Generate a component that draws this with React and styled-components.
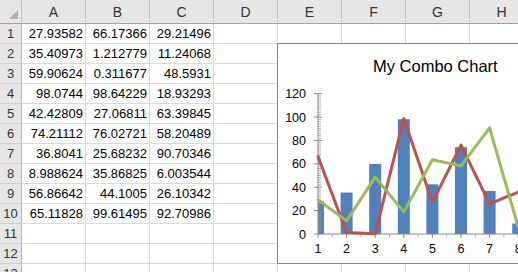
import React from "react";
import styled, { createGlobalStyle } from "styled-components";

const GlobalStyle = createGlobalStyle`
  html, body { margin: 0; padding: 0; background: #fff; overflow: hidden; }
  body { font-family: "Liberation Sans", Arial, sans-serif; }
`;

const Page = styled.div`
  width: 518px;
  height: 272px;
  overflow: hidden;
  position: relative;
`;

const Sheet = styled.div`
  display: grid;
  grid-template-columns: 22px repeat(8, 64px);
  grid-template-rows: 24px;
  grid-auto-rows: 20px;
  width: 534px;
  font-size: 13px;
`;

const Corner = styled.div`
  box-sizing: border-box;
  background: #e6e6e6;
  border-right: 1px solid #c4c4c4;
  border-bottom: 1px solid #a3a3a3;
  display: flex;
  justify-content: flex-end;
  align-items: flex-end;
  padding: 0 3px 4px 0;
`;

const Triangle = styled.div`
  width: 0;
  height: 0;
  border-left: 9px solid transparent;
  border-bottom: 9px solid #b1b1b1;
`;

const ColHeader = styled.div`
  box-sizing: border-box;
  background: #e6e6e6;
  border-right: 1px solid #c4c4c4;
  border-bottom: 1px solid #a3a3a3;
  display: flex;
  align-items: center;
  justify-content: center;
  color: #333;
  font-size: 14px;
  padding-top: 1px;
`;

const RowHeader = styled.div`
  box-sizing: border-box;
  background: #e6e6e6;
  border-right: 1px solid #b5b5b5;
  border-bottom: 1px solid #cfcfcf;
  display: flex;
  align-items: center;
  justify-content: center;
  color: #333;
  font-size: 13px;
`;

const Cell = styled.div`
  box-sizing: border-box;
  border-right: 1px solid #d9d9d9;
  border-bottom: 1px solid #d9d9d9;
  display: flex;
  align-items: center;
  justify-content: flex-end;
  padding-right: 2px;
  color: #000;
  white-space: nowrap;
`;

const ChartBox = styled.div`
  position: absolute;
  left: 277px;
  top: 43px;
  width: 330px;
  height: 221px;
  box-sizing: border-box;
  border: 1px solid #868686;
  background: #fff;
  overflow: hidden;
`;

const A = [27.93582, 35.40973, 59.90624, 98.0744, 42.42809, 74.21112, 36.8041, 8.988624, 56.86642, 65.11828];
const B = [66.17366, 1.212779, 0.311677, 98.64229, 27.06811, 76.02721, 25.68232, 35.86825, 44.1005, 99.61495];
const C = [29.21496, 11.24068, 48.5931, 18.93293, 63.39845, 58.20489, 90.70346, 6.003544, 26.10342, 92.70986];
const COLS = ["A", "B", "C", "D", "E", "F", "G", "H"];

const AX = 318;
const Y0 = 234;
const K = 1.17;
const STEP = 28.6;
const cx = (i) => AX + i * STEP;
const cy = (v) => Y0 - v * K;

function Chart() {
  const linePts = (arr) => arr.map((v, i) => `${cx(i)},${cy(v)}`).join(" ");
  const minor = [];
  for (let v = 0; v <= 120; v += 2) {
    if (v % 20 !== 0) minor.push(v);
  }
  return (
    <ChartBox>
      <svg width="330" height="221" style={{ display: "block" }}>
        <defs>
          <clipPath id="plot">
            <rect x={AX} y={80} width={300} height={Y0 - 80} />
          </clipPath>
        </defs>
        <g transform="translate(-278,-44)">
          <text x="373" y="72" fontSize="16.5" fill="#000" fontFamily="Liberation Sans, Arial, sans-serif">
            My Combo Chart
          </text>
          <g clipPath="url(#plot)">
            {A.map((v, i) => (
              <rect key={i} x={cx(i) - 6} y={cy(v)} width={12} height={v * K} fill="#4F81BD" />
            ))}
          </g>
          {/* y axis */}
          <line x1={AX} y1={cy(120)} x2={AX} y2={Y0} stroke="#868686" strokeWidth="1" />
          {[0, 20, 40, 60, 80, 100, 120].map((v) => (
            <g key={v}>
              <line x1={AX - 4} y1={cy(v)} x2={AX + 4} y2={cy(v)} stroke="#868686" strokeWidth="1" />
              <text x={306} y={cy(v) + 4.5} fontSize="12.5" textAnchor="end" fill="#000" fontFamily="Liberation Sans, Arial, sans-serif">
                {v}
              </text>
            </g>
          ))}
          {minor.map((v) => (
            <line key={v} x1={AX} y1={cy(v)} x2={AX + 3} y2={cy(v)} stroke="#9a9a9a" strokeWidth="0.8" />
          ))}
          {/* x axis */}
          <line x1={AX} y1={Y0} x2={560} y2={Y0} stroke="#868686" strokeWidth="1" />
          {[0, 1, 2, 3, 4, 5, 6, 7].map((i) => (
            <g key={i}>
              <line x1={cx(i)} y1={Y0} x2={cx(i)} y2={Y0 + 4} stroke="#868686" strokeWidth="1" />
              <line x1={cx(i) + STEP / 2} y1={Y0} x2={cx(i) + STEP / 2} y2={Y0 + 3} stroke="#9a9a9a" strokeWidth="0.8" />
              <text x={cx(i)} y={252.5} fontSize="12.5" textAnchor="middle" fill="#000" fontFamily="Liberation Sans, Arial, sans-serif">
                {i + 1}
              </text>
            </g>
          ))}
          <polyline points={linePts(B)} fill="none" stroke="#C0504D" strokeWidth="3" strokeLinejoin="round" strokeLinecap="round" />
          <polyline points={linePts(C)} fill="none" stroke="#9BBB59" strokeWidth="3" strokeLinejoin="round" strokeLinecap="round" />
        </g>
      </svg>
    </ChartBox>
  );
}

export default function App() {
  const rows = [];
  for (let r = 0; r < 13; r++) {
    rows.push(
      <React.Fragment key={r}>
        <RowHeader>{r + 1}</RowHeader>
        {COLS.map((c, ci) => {
          let val = "";
          if (r < 10) {
            if (ci === 0) val = A[r];
            if (ci === 1) val = B[r];
            if (ci === 2) val = C[r];
          }
          return <Cell key={c}>{val}</Cell>;
        })}
      </React.Fragment>
    );
  }
  return (
    <Page>
      <GlobalStyle />
      <Sheet>
        <Corner>
          <Triangle />
        </Corner>
        {COLS.map((c) => (
          <ColHeader key={c}>{c}</ColHeader>
        ))}
        {rows}
      </Sheet>
      <Chart />
    </Page>
  );
}
